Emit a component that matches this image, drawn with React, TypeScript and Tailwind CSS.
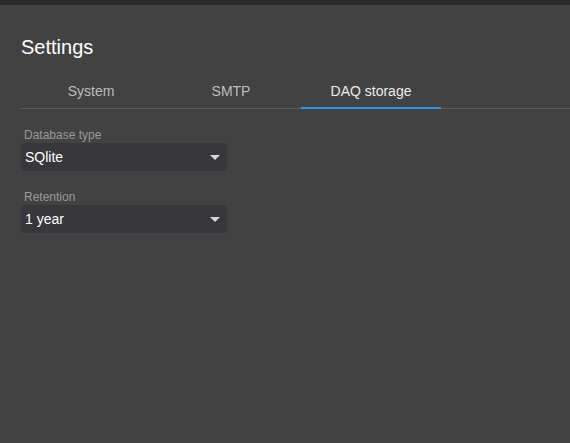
import { useState } from 'react';

const tabs = ['System', 'SMTP', 'DAQ storage'];

function SelectField({ label, value }: { label: string; value: string }) {
    return (
        <div className="flex flex-col w-[206px]">
            <label className="text-[12px] leading-[14px] text-[#9a9a9a] pl-[3px] mb-[1px]">{label}</label>
            <div className="h-[28px] bg-[#38373c] rounded-[2px] flex items-center justify-between pl-[4px] pr-[7px]">
                <span className="text-[14px] text-white">{value}</span>
                <svg width="10" height="5" viewBox="0 0 10 5" className="fill-[#d8d8d8]">
                    <path d="M0 0h10L5 5z" />
                </svg>
            </div>
        </div>
    );
}

export default function App() {
    const [active, setActive] = useState(2);

    return (
        <div className="w-[570px] h-[443px] bg-[#424242] flex flex-col font-['Liberation_Sans',Arial,sans-serif]">
            {/* top strip */}
            <div className="h-[5px] bg-[#2a2a2a]" />

            <div className="pl-[21px] flex flex-col">
                <h1 className="text-[20px] leading-[24px] text-white mt-[30px]">Settings</h1>

                {/* Tabs */}
                <div className="flex mt-[24px] border-b border-[#5c5c5c]">
                    {tabs.map((t, i) => (
                        <button
                            key={t}
                            onClick={() => setActive(i)}
                            className={`w-[140px] h-[26px] text-[14px] leading-[16px] pb-[8px] border-b-2 -mb-[1px] ${
                                i === active ? 'text-[#ececec] border-[#2196f3]' : 'text-[#bdbdbd] border-transparent'
                            }`}
                        >
                            {t}
                        </button>
                    ))}
                </div>

                {/* DAQ storage form */}
                <div className="flex flex-col gap-[19px] mt-[19px]">
                    <SelectField label="Database type" value="SQlite" />
                    <SelectField label="Retention" value="1 year" />
                </div>
            </div>
        </div>
    );
}
